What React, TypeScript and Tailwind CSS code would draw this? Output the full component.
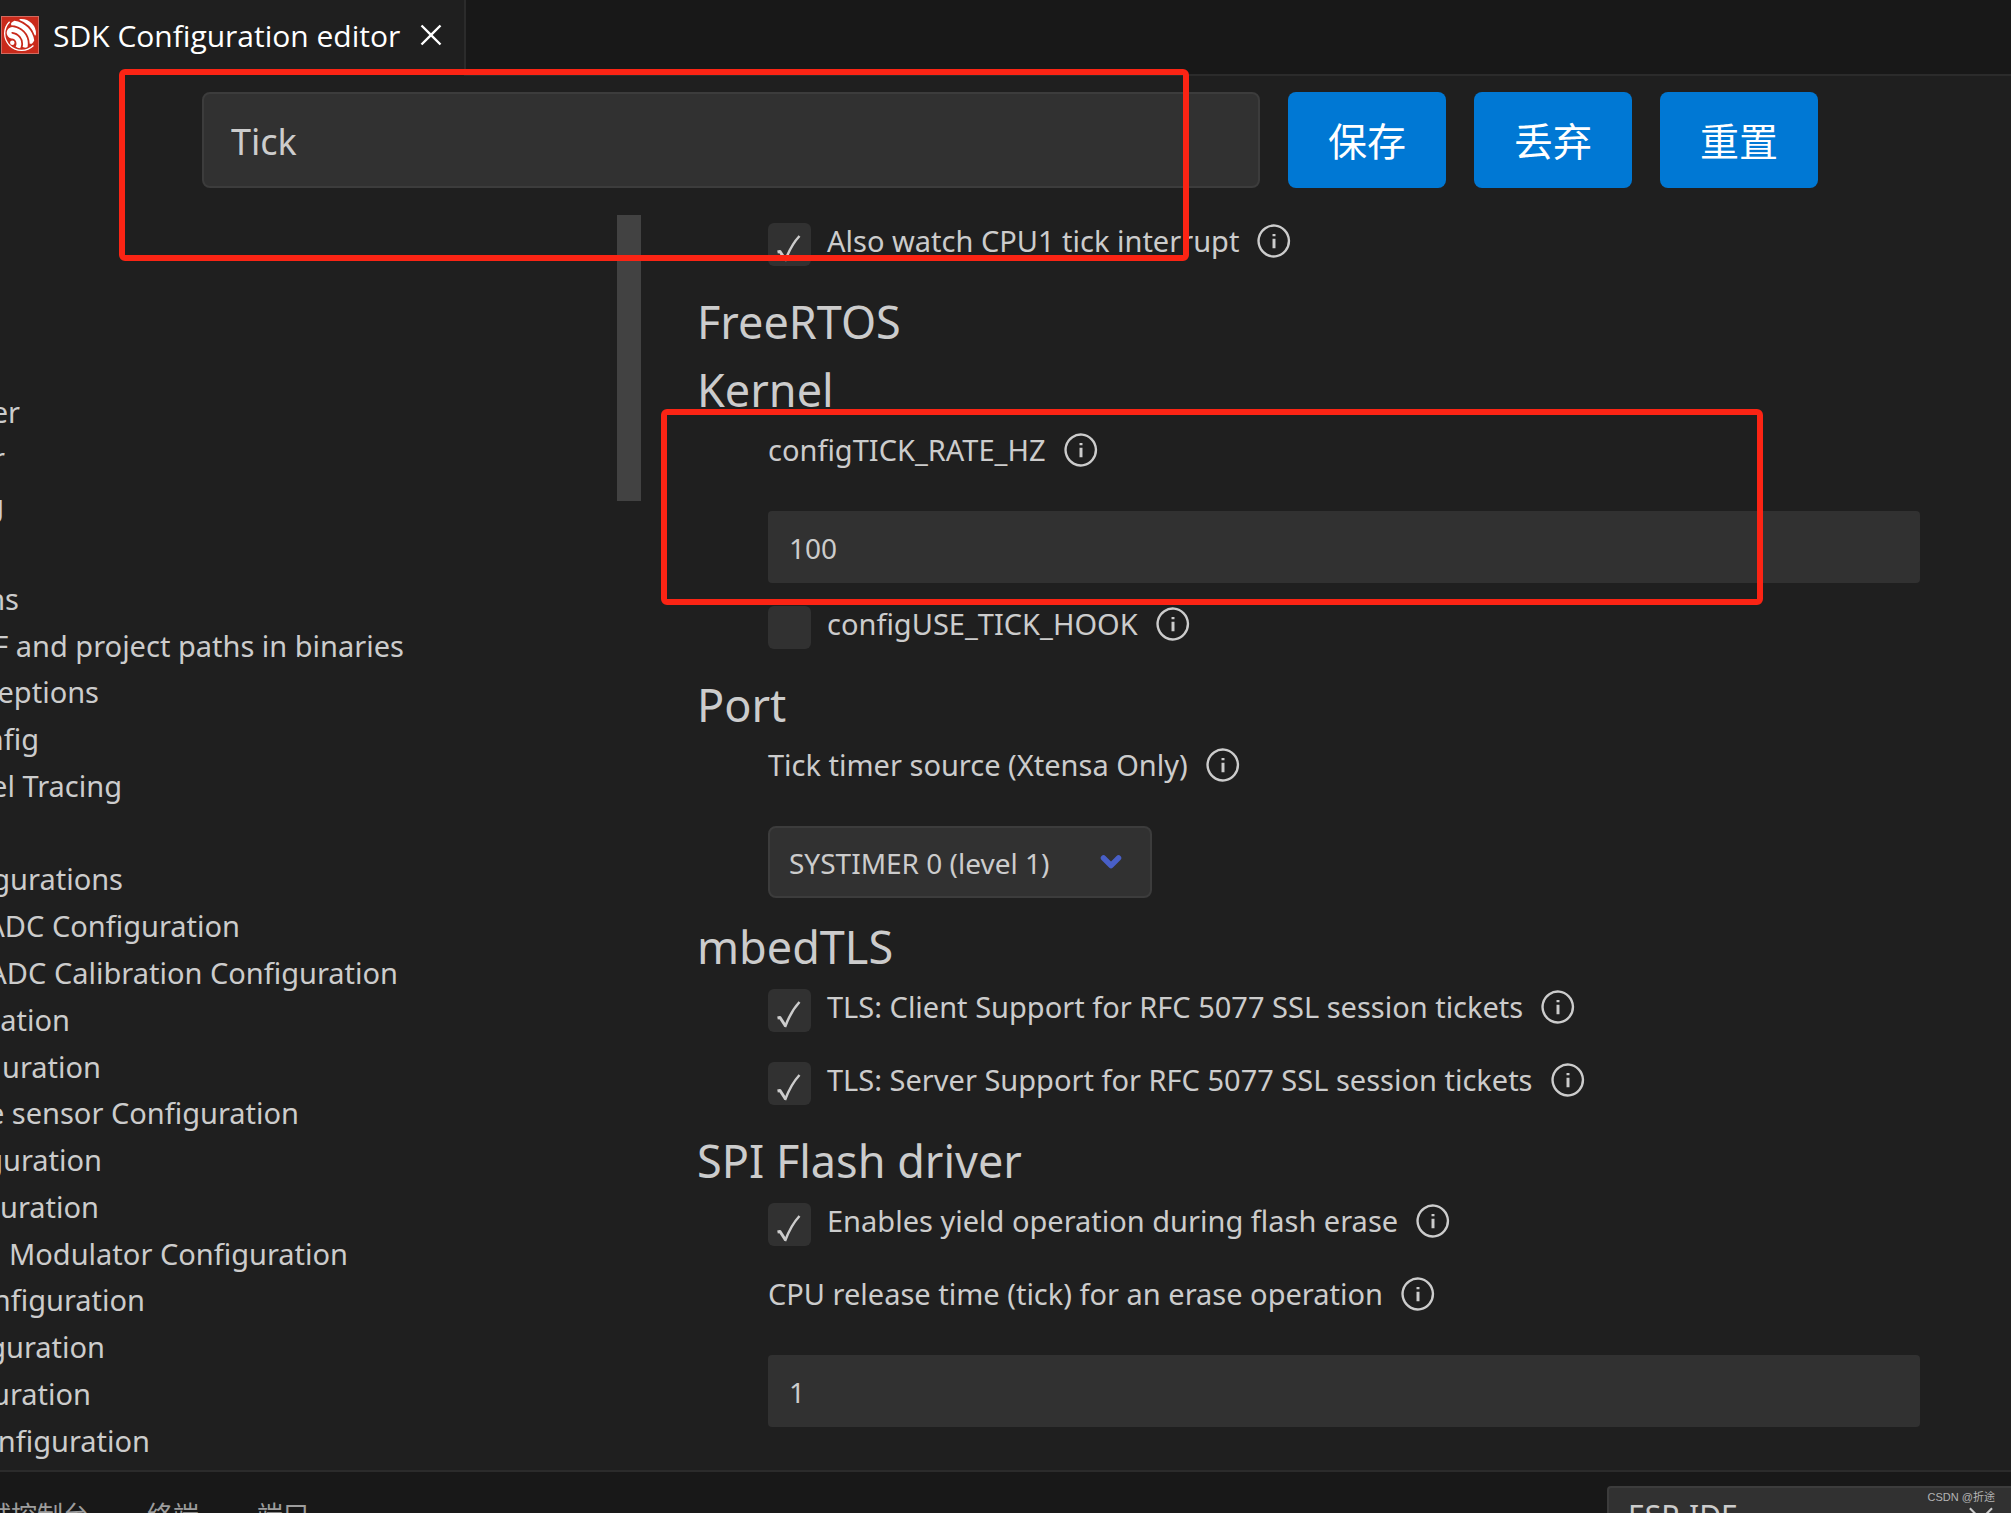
import { useState } from 'react';
import type { ReactNode } from 'react';
import { SiEspressif } from 'react-icons/si';
import { VscChevronDown, VscClose, VscInfo } from 'react-icons/vsc';

// The tree is scrolled sideways: `end` is where each entry stops, its head is cut off.
const treeItems: { text: string; end: number }[] = [
  { text: 'er', end: 20 },
  { text: 'r', end: 5 },
  { text: 'g', end: 4 },
  { text: '', end: 0 },
  { text: 'ns', end: 19 },
  { text: 'F and project paths in binaries', end: 404 },
  { text: 'eptions', end: 99 },
  { text: 'nfig', end: 39 },
  { text: 'el Tracing', end: 122 },
  { text: '', end: 0 },
  { text: 'gurations', end: 123 },
  { text: 'ADC Configuration', end: 240 },
  { text: 'ADC Calibration Configuration', end: 398 },
  { text: 'ation', end: 70 },
  { text: 'uration', end: 101 },
  { text: 'e sensor Configuration', end: 299 },
  { text: 'guration', end: 102 },
  { text: 'uration', end: 99 },
  { text: 'Modulator Configuration', end: 348 },
  { text: 'nfiguration', end: 145 },
  { text: 'guration', end: 105 },
  { text: 'uration', end: 91 },
  { text: 'nfiguration', end: 150 },
];

function InfoButton({ about }: { about: string }) {
  return (
    <button type="button" aria-label={`About ${about}`} className="shrink-0">
      <VscInfo size={38} />
    </button>
  );
}

function SectionTitle({ children }: { children: ReactNode }) {
  return <h2 className="pb-px text-[45px] leading-[67px]">{children}</h2>;
}

function CheckRow({ id, label, initial = false }: { id: string; label: string; initial?: boolean }) {
  const [checked, setChecked] = useState(initial);
  return (
    <div className="ml-[71px] flex h-[73px] items-start">
      <span className="relative mt-2 mr-4 size-[43px] shrink-0">
        <input
          id={id}
          type="checkbox"
          checked={checked}
          onChange={(e) => setChecked(e.target.checked)}
          className="block size-full appearance-none rounded-md bg-[#313131]"
        />
        {checked && (
          <svg viewBox="0 0 43 43" className="pointer-events-none absolute inset-0 size-full" fill="none" stroke="#cccccc">
            <path d="M9.500 29l2.500-.5 5.500 8.500" strokeWidth="3" strokeLinejoin="round" />
            <path d="M17 38C20 30 25 20 31.500 13" strokeWidth="2.500" />
          </svg>
        )}
      </span>
      <div className="flex items-center gap-4">
        <label htmlFor={id} className="leading-[52px] whitespace-nowrap">{label}</label>
        <InfoButton about={label} />
      </div>
    </div>
  );
}

function FieldRow({ id, label, children }: { id: string; label: string; children: ReactNode }) {
  return (
    <div className="ml-[71px] pb-[15px]">
      <div className="mb-[35px] flex items-center gap-4">
        <label htmlFor={id} className="leading-[52px] whitespace-nowrap">{label}</label>
        <InfoButton about={label} />
      </div>
      {children}
    </div>
  );
}

function TextField({ id, initial }: { id: string; initial: string }) {
  const [value, setValue] = useState(initial);
  return (
    <input
      id={id}
      type="text"
      value={value}
      onChange={(e) => setValue(e.target.value)}
      className="block h-[72px] w-full rounded bg-[#313131] px-[21px] pt-0.5 text-[28px] outline-none"
    />
  );
}

export default function App() {
  const [search, setSearch] = useState('Tick');

  const actionClass = 'h-24 w-[158px] shrink-0 rounded-lg bg-[#0078d4] pt-0.5 text-[39px] text-white';

  return (
    <div className="relative flex h-screen flex-col overflow-hidden bg-[#1f1f1f] font-['Noto_Sans','Noto_Sans_CJK_SC',sans-serif] text-[29px] text-[#cccccc]">
      <header className="flex h-[76px] shrink-0 bg-[#181818]">
        <div className="flex items-center border-r-2 border-[#2b2b2b] bg-[#1f1f1f] pr-[14px] pb-[6px] pl-px text-white">
          <span className="flex size-[38px] items-center justify-center border border-[#d2695f] bg-[#c92a1b]">
            <SiEspressif size={32} />
          </span>
          <span className="ml-[14px] font-['Open_Sans',sans-serif] text-[30px] whitespace-nowrap">SDK Configuration editor</span>
          <button type="button" aria-label="Close" className="ml-3">
            <VscClose size={38} />
          </button>
        </div>
        <div className="flex-1 border-b-2 border-[#2b2b2b]" />
      </header>

      <div className="flex shrink-0 gap-7 pt-4 pr-[193px] pb-[27px] pl-[202px]">
        <input
          type="text"
          aria-label="Search parameter"
          value={search}
          onChange={(e) => setSearch(e.target.value)}
          className="h-24 min-w-0 flex-1 rounded-lg border-2 border-[#3c3c3c] bg-[#313131] px-[27px] pt-0.5 text-[36px] outline-none"
        />
        <button type="button" className={actionClass}>保存</button>
        <button type="button" className={actionClass}>丢弃</button>
        <button type="button" className={actionClass}>重置</button>
      </div>

      <main className="flex min-h-0 flex-1">
        <nav aria-label="Configuration menu" className="flex w-[617px] shrink-0 flex-col pt-[173px] pb-[6px]">
          <ul className="flex flex-1 flex-col">
            {treeItems.map((item, i) => (
              <li key={i} className="flex flex-1 items-center justify-end overflow-hidden" style={{ width: item.end }}>
                {item.text && <button type="button" className="shrink-0 whitespace-nowrap">{item.text}</button>}
              </li>
            ))}
          </ul>
        </nav>
        <div className="w-6 shrink-0">
          <div className="h-[286px] bg-[#424242]" />
        </div>

        <section className="min-w-0 flex-1 overflow-hidden pr-[91px] pl-14">
          <CheckRow id="cpu1" label="Also watch CPU1 tick interrupt" initial />
          <SectionTitle>FreeRTOS</SectionTitle>
          <SectionTitle>Kernel</SectionTitle>
          <FieldRow id="tick-rate" label="configTICK_RATE_HZ">
            <TextField id="tick-rate" initial="100" />
          </FieldRow>
          <CheckRow id="tick-hook" label="configUSE_TICK_HOOK" />
          <SectionTitle>Port</SectionTitle>
          <FieldRow id="tick-source" label="Tick timer source (Xtensa Only)">
            <div className="relative w-[384px]">
              <select
                id="tick-source"
                className="block h-[72px] w-full appearance-none rounded-lg border-2 border-[#3c3c3c] bg-[#313131] pt-0.5 pr-16 pl-[19px] text-[28px] outline-none"
              >
                <option>SYSTIMER 0 (level 1)</option>
                <option>SYSTIMER 0 (level 3)</option>
              </select>
              <svg viewBox="0 0 22 16" className="pointer-events-none absolute top-7 right-[30px] h-4 w-[22px]">
                <path d="M3.500 4L11 11.500 18.500 4" fill="none" stroke="#485fc7" strokeWidth="5.500" strokeLinecap="round" strokeLinejoin="round" />
              </svg>
            </div>
          </FieldRow>
          <SectionTitle>mbedTLS</SectionTitle>
          <CheckRow id="tls-client" label="TLS: Client Support for RFC 5077 SSL session tickets" initial />
          <CheckRow id="tls-server" label="TLS: Server Support for RFC 5077 SSL session tickets" initial />
          <SectionTitle>SPI Flash driver</SectionTitle>
          <CheckRow id="flash-yield" label="Enables yield operation during flash erase" initial />
          <FieldRow id="erase-ticks" label="CPU release time (tick) for an erase operation">
            <TextField id="erase-ticks" initial="1" />
          </FieldRow>
        </section>
      </main>

      <footer className="flex h-[43px] shrink-0 items-start justify-between overflow-hidden border-t-2 border-[#2b2b2b] bg-[#181818] text-[#9d9d9d]">
        <div className="flex gap-[58px] pt-6 text-[26px] leading-[38px]">
          <div className="flex w-[89px] justify-end">
            <button type="button" className="shrink-0">试控制台</button>
          </div>
          <button type="button">终端</button>
          <button type="button">端口</button>
        </div>
        <div className="relative mt-[14px] w-[404px] shrink-0">
          <select
            aria-label="Output channel"
            className="block h-[58px] w-full appearance-none rounded-tl border-2 border-r-0 border-[#3c3c3c] bg-[#313131] pl-[19px] text-[30px] text-[#cccccc] outline-none"
          >
            <option>ESP-IDF</option>
          </select>
          <VscChevronDown size={38} className="pointer-events-none absolute top-2 right-[11px] text-[#cccccc]" />
        </div>
      </footer>

      <div className="pointer-events-none absolute top-[69px] left-[119px] h-[192px] w-[1070px] rounded-md border-[6px] border-[#fb2414]" />
      <div className="pointer-events-none absolute top-[409px] left-[661px] h-[196px] w-[1102px] rounded-md border-[6px] border-[#fb2414]" />
      <span className="pointer-events-none absolute right-4 bottom-2 font-['Liberation_Sans','Noto_Sans_CJK_SC',sans-serif] text-[11px] leading-4 text-[#b4b4b4]">
        CSDN @折途
      </span>
    </div>
  );
}
